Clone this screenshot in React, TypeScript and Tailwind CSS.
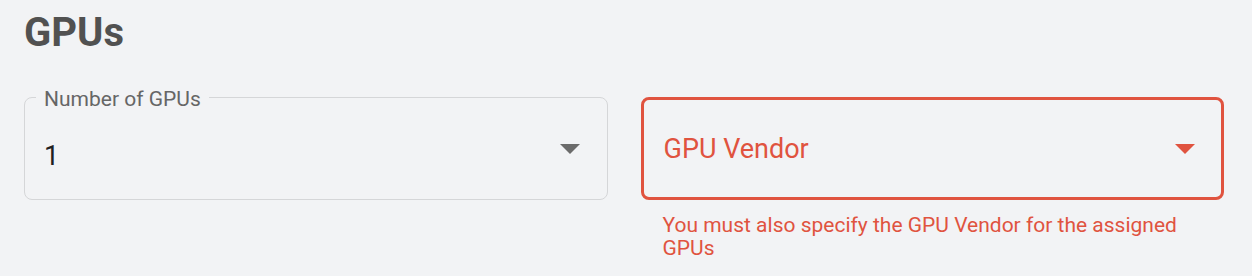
export default function App() {
  return (
    <div className="h-[276px] w-full bg-[#f2f3f5] pl-[24px] pr-[28px] font-['Roboto',sans-serif]">
      <h2 className="pt-[13px] text-[40px] leading-none font-bold text-[#515151]">GPUs</h2>

      <div className="mt-[44px] grid grid-cols-2 gap-[33px] items-start">
        <div className="relative flex h-[103px] items-center rounded-[8px] border border-[#d5d6d8] pl-[19px] pr-[27px]">
          <span className="absolute -top-[11px] left-[11px] bg-[#f2f3f5] px-[8px] text-[21px] leading-[24px] text-[#666666]">
            Number of GPUs
          </span>
          <span className="mt-[14px] flex-1 text-[27px] leading-[30px] text-[#202020]">1</span>
          <svg width="20" height="10" viewBox="0 0 20 10" className="shrink-0">
            <path d="M0 0h20L10 10z" fill="#6b6b6b" />
          </svg>
        </div>

        <div>
          <div className="flex h-[103px] items-center rounded-[8px] border-[3px] border-[#e0533f] pl-[20px] pr-[26px]">
            <span className="flex-1 text-[27px] leading-[32px] text-[#e0533f]">GPU Vendor</span>
            <svg width="20" height="10" viewBox="0 0 20 10" className="shrink-0">
              <path d="M0 0h20L10 10z" fill="#e0533f" />
            </svg>
          </div>
          <p className="mt-[14px] pl-[22px] pr-[40px] text-[21px] leading-[23px] text-[#e0533f]">
            You must also specify the GPU Vendor for the assigned GPUs
          </p>
        </div>
      </div>
    </div>
  );
}
